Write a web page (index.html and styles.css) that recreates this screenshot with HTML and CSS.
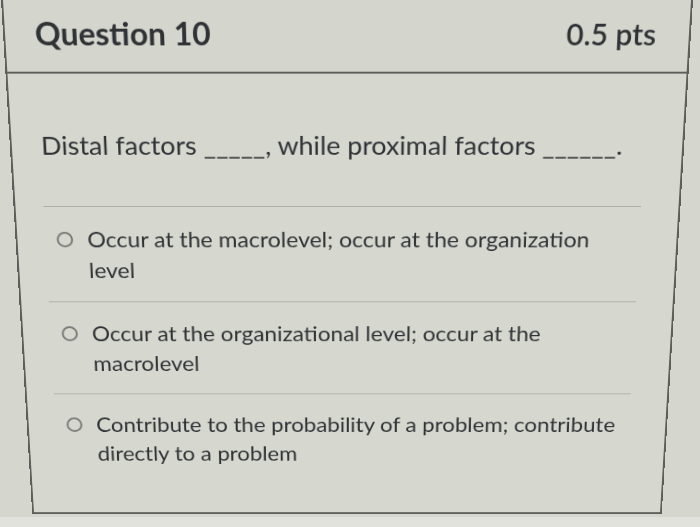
FILE: index.html
```html
<!DOCTYPE html>
<html lang="en">

<head>
    <meta charset="UTF-8">
    <meta name="viewport" content="width=device-width, initial-scale=1.0">
    <title>Question 10</title>
    <link rel="stylesheet" href="styles.css">
</head>

<body>

    <div class="question">
        <div class="header">
            <h2 class="question-name">Question 10</h2>
            <span class="points">0.5 pts</span>
        </div>

        <div class="content">
            <p class="question-text">Distal factors _____, while proximal factors ______.</p>

            <div class="answers">
                <label class="answer">
                    <span class="radio"></span>
                    <span class="answer-text">Occur at the macrolevel; occur at the organization level</span>
                </label>
                <label class="answer">
                    <span class="radio"></span>
                    <span class="answer-text">Occur at the organizational level; occur at the macrolevel</span>
                </label>
                <label class="answer">
                    <span class="radio"></span>
                    <span class="answer-text">Contribute to the probability of a problem; contribute directly to a problem</span>
                </label>
            </div>
        </div>
    </div>

</body>

</html>
```

FILE: styles.css
```css
body {
    margin: 0;
    height: 100vh;
    overflow: hidden;
    font-family: Lato, "Open Sans", sans-serif;
    color: #303336;
    background: linear-gradient(to bottom, #d5d6ce 517px, #e1e2dc 517px);
}

/* the photo is taken at an angle, so the card is tilted back a little */
.question {
    box-sizing: border-box;
    width: 692px;
    margin-left: 1px;
    border: 2px solid #5e5f5a;
    border-top: none;
    background-color: #d6d7cf;
    transform-origin: 50% 0;
    transform: perspective(598px) rotateX(-6deg);
}

.header {
    display: flex;
    justify-content: space-between;
    align-items: baseline;
    height: 75px;
    box-sizing: border-box;
    padding: 16px 33px 0 30px;
    border-bottom: 2px solid #5e5f5a;
    background-color: #d4d5cd;
}

.question-name {
    margin: 0;
    font-size: 32px;
    line-height: 36px;
    font-weight: 700;
}

.points {
    font-size: 30px;
    line-height: 36px;
    font-weight: 600;
}

.content {
    padding: 58px 39px 36px 29px;
}

.question-text {
    margin: 0 0 48px 1px;
    font-size: 27.5px;
    line-height: 34px;
}

.answer {
    display: flex;
    align-items: flex-start;
    gap: 15px;
    padding: 18px 0 18px 12px;
    border-top: 1px solid #acada6;
    font-size: 24px;
    line-height: 34px;
}

.radio {
    flex: none;
    width: 17px;
    height: 17px;
    margin-top: 9px;
    box-sizing: border-box;
    border: 2px solid #7a7b78;
    border-radius: 50%;
}

.answer-text {
    max-width: 570px;
}
```
